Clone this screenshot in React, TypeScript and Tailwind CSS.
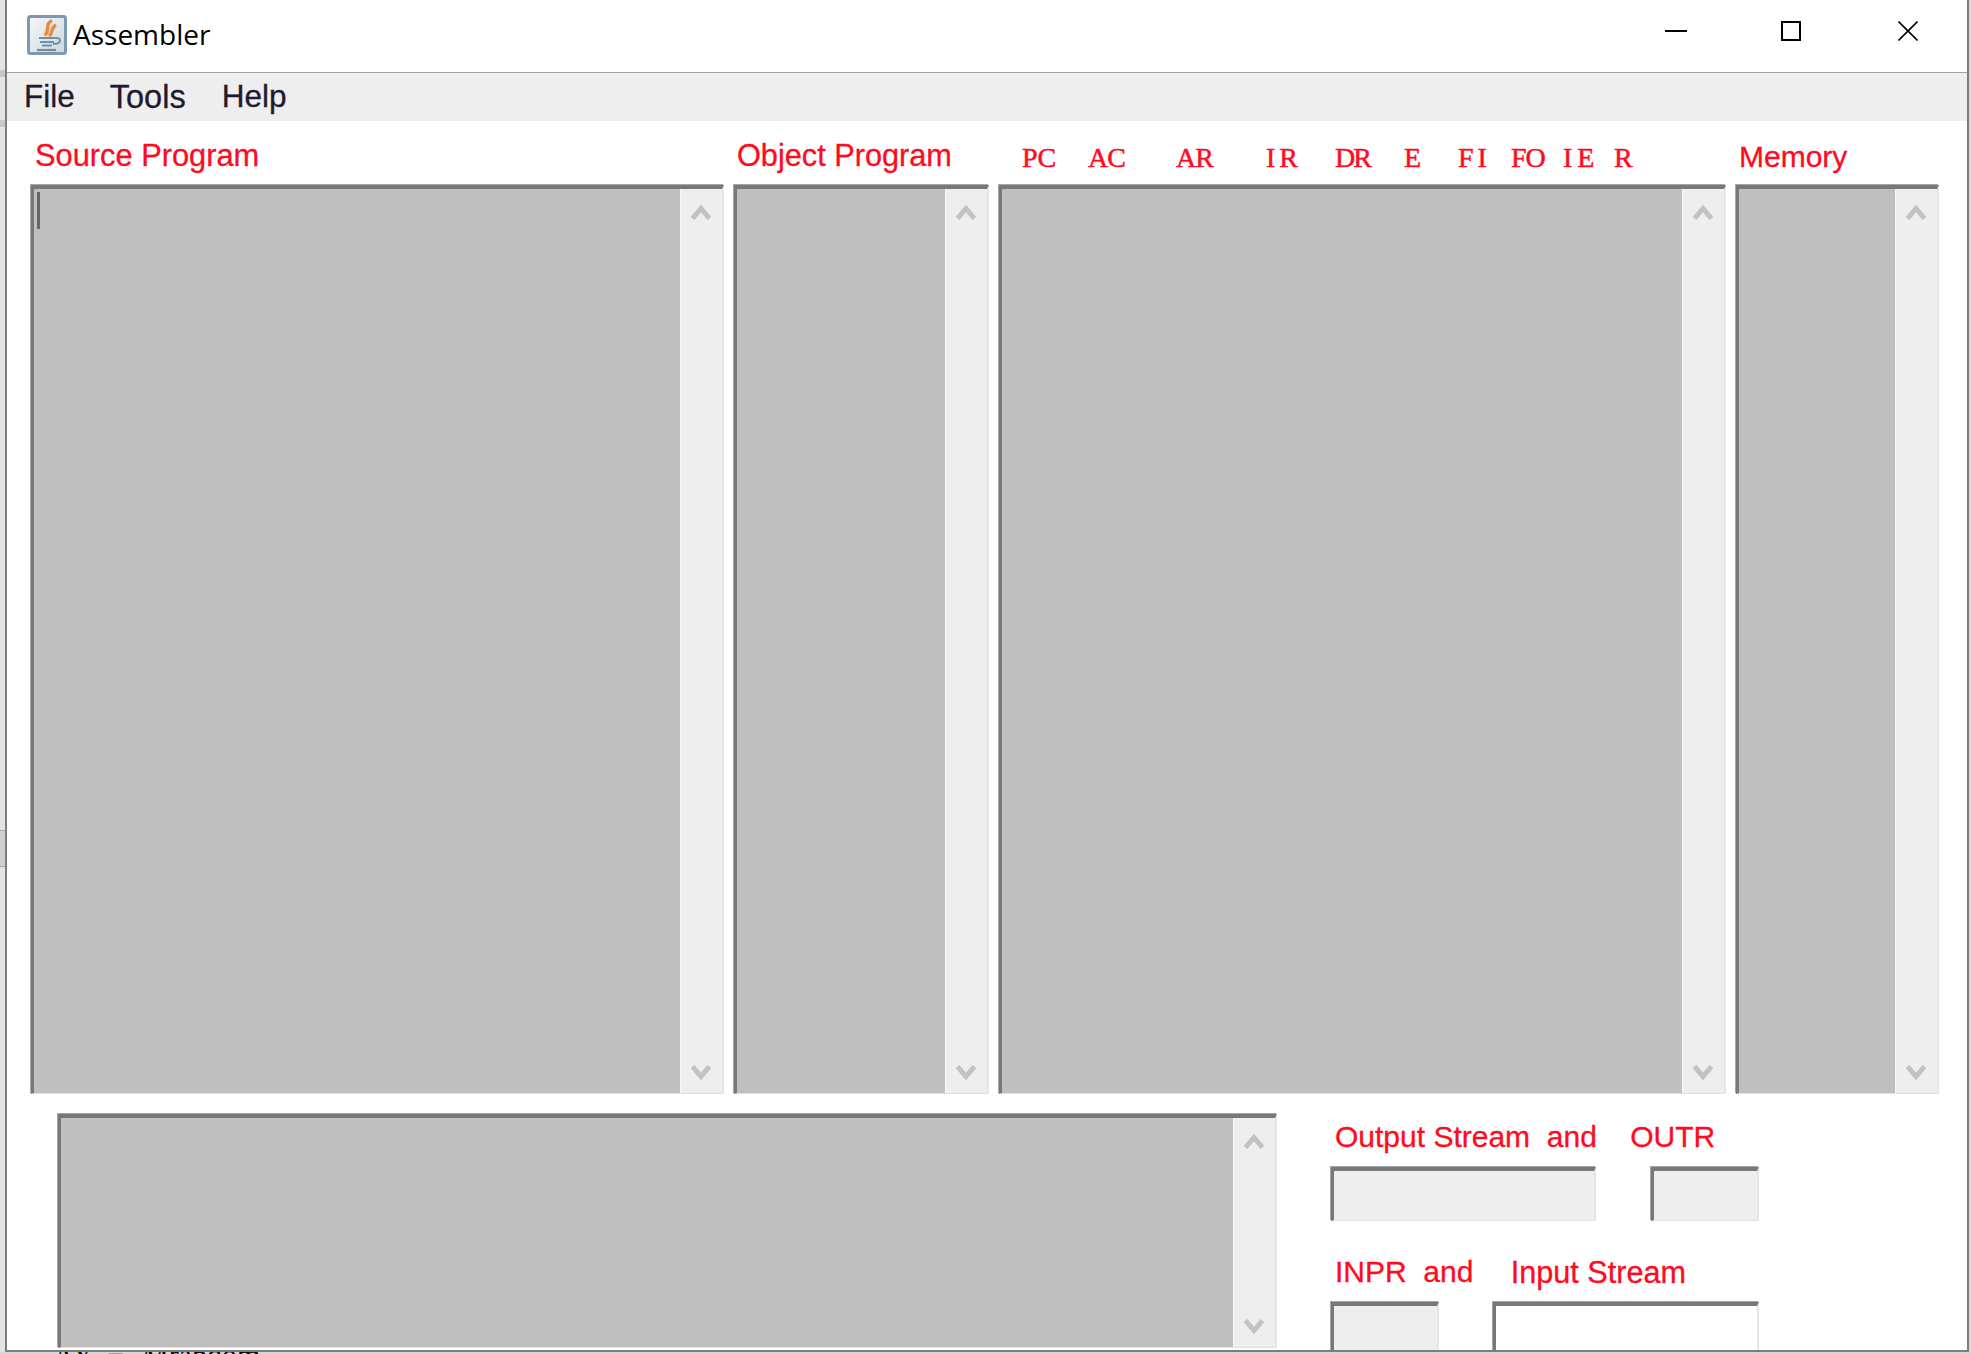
import React from "react";

const sans = "font-['Liberation_Sans',Arial,sans-serif]";
const label = `${sans} leading-none text-[#ff0a1e] whitespace-pre [-webkit-text-stroke:0.3px_#ff0a1e]`;
const bevel = "mt-[1px] ml-[1px] shadow-[-1px_-1px_0_#a6a6a6] border-t-4 border-l-[3px] border-r-2 border-b border-t-[#787878] border-l-[#787878] border-r-[#e6e6e6] border-b-[#e0e0e0]";

function ChevronUp() {
  return (
    <svg width="20" height="15" viewBox="0 0 20 15" fill="none">
      <path d="M1.5 13.5 L10 3.5 L18.5 13.5" stroke="#c2c2c2" strokeWidth="5" />
    </svg>
  );
}

function ChevronDown() {
  return (
    <svg width="20" height="15" viewBox="0 0 20 15" fill="none">
      <path d="M1.5 1.5 L10 11.5 L18.5 1.5" stroke="#c2c2c2" strokeWidth="5" />
    </svg>
  );
}

function ScrollPanel({ className, bar, children }: { className: string; bar: string; children?: React.ReactNode }) {
  return (
    <div className={`${bevel} ${className} flex bg-[#eeeeee]`}>
      <div className="flex-1 bg-[#bfbfbf]">{children}</div>
      <div className={`${bar} border-l border-l-[#f8f8f8] flex flex-col items-center justify-between pt-4 pb-[13px] pr-[2px]`}>
        <ChevronUp />
        <ChevronDown />
      </div>
    </div>
  );
}

function JavaIcon() {
  return (
    <svg width="40" height="40" viewBox="0 0 40 40">
      <defs>
        <linearGradient id="tile" x1="0" y1="0" x2="1" y2="1">
          <stop offset="0" stopColor="#f6f8f9" />
          <stop offset="1" stopColor="#ccd7df" />
        </linearGradient>
      </defs>
      <rect x="1.5" y="1.5" width="37" height="37" rx="2" fill="url(#tile)" stroke="#7f98ad" strokeWidth="3" />
      <path d="M25 5.5 C17 10 24 13 18 20.5 M29 10 C23 13 27 17 22 21" fill="none" stroke="#e88a3c" strokeWidth="3.4" />
      <path d="M12 23 H28 M13 27 H27 M15 30.5 H25" stroke="#6f8ea8" strokeWidth="2.2" />
      <path d="M28 23 C35 22 35 29 26 29" fill="none" stroke="#6f8ea8" strokeWidth="2" />
      <path d="M10 35 H29" stroke="#6f8ea8" strokeWidth="2.2" />
    </svg>
  );
}

function Field({ className }: { className: string }) {
  return <div className={`${bevel} ${className} h-[54px] shrink-0`} />;
}

const registers = [
  { name: "PC", className: "w-[66px]" },
  { name: "AC", className: "w-[88px] -tracking-[1px]" },
  { name: "AR", className: "w-[90px] -tracking-[1px]" },
  { name: "IR", className: "w-[69px] tracking-[4px]" },
  { name: "DR", className: "w-[69px] -tracking-[2px]" },
  { name: "E", className: "w-[54px]" },
  { name: "FI", className: "w-[53px] tracking-[4px]" },
  { name: "FO", className: "w-[52px] -tracking-[1px]" },
  { name: "IE", className: "w-[51px] tracking-[5px]" },
  { name: "R", className: "w-[20px]" },
];

export default function App() {
  return (
    <div className="w-[1971px] h-[1354px] overflow-hidden bg-[#d6d6d6] flex flex-col">
      <div className="relative z-10 h-[1352px] shrink-0 flex">
        {/* whatever sits behind the window on the left */}
        <div className="w-[5px] shrink-0 bg-[#e4e4e4] flex flex-col">
          <div className="h-[70px]" />
          <div className="h-[7px] bg-[#c8c8c8]" />
          <div className="h-[43px]" />
          <div className="h-[7px] bg-[#c8c8c8]" />
          <div className="h-[703px]" />
          <div className="h-[37px] bg-[#d0d0d0] border-y border-[#aaaaaa]" />
          <div className="h-[484px]" />
        </div>

        <div className="w-[1964px] shrink-0 border-l-2 border-r-2 border-b-2 border-[#7d7d7d] bg-white flex flex-col overflow-hidden">
          {/* title bar */}
          <div className="h-[73px] shrink-0 border-b border-[#a3a3a3] flex items-center pl-5 pr-[49px] pb-[2px]">
            <JavaIcon />
            <span className="ml-[6px] -mt-[2px] font-['Open_Sans',sans-serif] text-[28px] leading-none text-black">Assembler</span>
            <div className="ml-auto flex items-center pb-[8px]">
              <svg width="22" height="22" viewBox="0 0 22 22">
                <path d="M0 11 H22" stroke="#000" strokeWidth="2" />
              </svg>
              <svg className="ml-[94px]" width="20" height="20" viewBox="0 0 20 20" fill="none">
                <rect x="1" y="1" width="18" height="18" stroke="#000" strokeWidth="2" />
              </svg>
              <svg className="ml-[97px]" width="20" height="20" viewBox="0 0 20 20" fill="none">
                <path d="M0.5 0.5 L19.5 19.5 M19.5 0.5 L0.5 19.5" stroke="#000" strokeWidth="1.6" />
              </svg>
            </div>
          </div>

          {/* menu bar */}
          <div className={`${sans} h-[48px] shrink-0 bg-[#eeeeee] flex items-center pl-[17px] text-[31.5px] leading-none text-[#1f1a2e] [-webkit-text-stroke:0.3px_#1f1a2e]`}>
            <span>File</span>
            <span className="ml-[35px] text-[32.5px]">Tools</span>
            <span className="ml-[36px]">Help</span>
          </div>

          {/* upper panels */}
          <div className="flex gap-[9px] pl-[23px] shrink-0">
            <div className="w-[694px]">
              <div className="h-[63px] flex items-center pl-[5px] pt-[8px]">
                <span className={`${label} text-[30.8px]`}>Source Program</span>
              </div>
              <ScrollPanel className="h-[909px]" bar="w-[42px]">
                <div className="w-[3px] h-[37px] bg-[#666666] ml-[3px] mt-[3px]" />
              </ScrollPanel>
            </div>

            <div className="w-[256px]">
              <div className="h-[63px] flex items-center pl-[4px] pt-[8px]">
                <span className={`${label} text-[30.7px]`}>Object Program</span>
              </div>
              <ScrollPanel className="h-[909px]" bar="w-[42px]" />
            </div>

            <div className="w-[728px]">
              <div className="h-[63px] flex items-center pl-[24px] pt-[10px] font-['Liberation_Serif',serif] text-[28px] leading-none text-[#ff0a1e] [-webkit-text-stroke:0.5px_#ff0a1e]">
                {registers.map(r => (
                  <span key={r.name} className={`${r.className} shrink-0`}>{r.name}</span>
                ))}
              </div>
              <ScrollPanel className="h-[909px]" bar="w-[42px]" />
            </div>

            <div className="w-[204px]">
              <div className="h-[63px] flex items-center pl-[4px] pt-[8px]">
                <span className={`${label} text-[30px]`}>Memory</span>
              </div>
              <ScrollPanel className="h-[909px]" bar="w-[42px]" />
            </div>
          </div>

          {/* lower panel and stream fields */}
          <div className="flex pl-[50px] pt-[19px] shrink-0">
            <ScrollPanel className="w-[1219px] h-[234px] shrink-0" bar="w-[42px]" />

            <div className="ml-[53px] w-[429px] shrink-0">
              <div className="h-[53px] flex items-center pl-[5px] pb-[5px]">
                <span className={`${label} text-[30px]`}>{"Output Stream  and    OUTR"}</span>
              </div>
              <div className="flex gap-[54px]">
                <Field className="w-[265px] bg-[#eeeeee]" />
                <Field className="w-[108px] bg-[#eeeeee]" />
              </div>
              <div className="h-[56px] mt-[24px] flex items-center pl-[5px] pb-[2px]">
                <span className={`${label} text-[30px]`}>{"INPR  and    "}</span>
                <span className={`${label} text-[30.6px] ml-[4px]`}>Input Stream</span>
              </div>
              <div className="flex gap-[53px]">
                <Field className="w-[108px] bg-[#eeeeee]" />
                <Field className="w-[266px] bg-white" />
              </div>
            </div>
          </div>
        </div>

        <div className="w-[2px] shrink-0 bg-[#d8d8d8]" />
      </div>

      {/* document text peeking out under the window */}
      <div className="pl-[53px] -mt-[12px] flex items-start font-['Liberation_Serif',serif] text-[30px] leading-none text-black">
        <span className="w-[54px]">AY</span>
        <span className="w-[35px] -mt-[3px]">=</span>
        <span>Mrandom</span>
      </div>
    </div>
  );
}
